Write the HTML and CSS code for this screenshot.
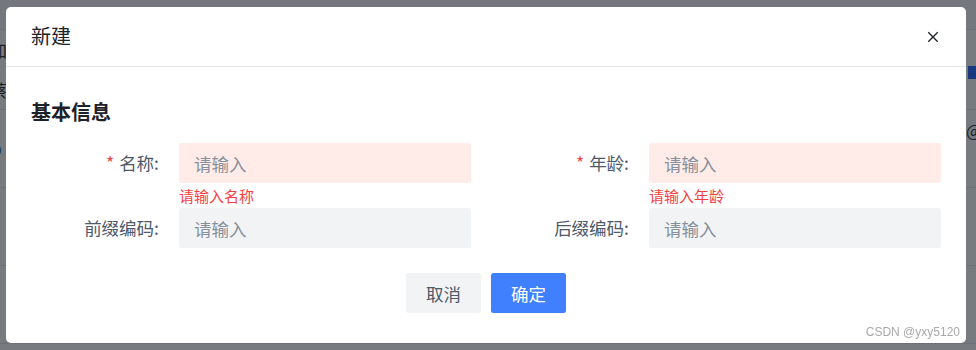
FILE: index.html
```html
<!DOCTYPE html>
<html lang="zh-CN">
<head>
  <meta charset="UTF-8" />
  <meta name="viewport" content="width=device-width, initial-scale=1.0"/>
  <title>新建</title>
  <link rel="stylesheet" href="styles.css">
</head>
<body>

  <!-- 底层列表页 -->
  <div class="page">
    <div class="page-row page-head"></div>
    <div class="page-row row-tall">
      <div class="cell-left">加<br>蔡</div>
      <div class="cell-right"><span class="link-bar"></span></div>
    </div>
    <div class="page-row row-mid">
      <div class="cell-left">D</div>
      <div class="cell-right">e@</div>
    </div>
    <div class="page-row row-mid"></div>
    <div class="page-row"></div>
  </div>

  <!-- 弹窗 -->
  <div class="mask">
    <div class="modal">
      <div class="modal-header">
        <span class="modal-title">新建</span>
        <button class="modal-close" type="button">
          <svg viewBox="0 0 48 48" width="16" height="16" fill="none" stroke="currentColor" stroke-width="4">
            <path d="M9.857 9.858 38.142 38.142M38.142 9.858 9.857 38.142"/>
          </svg>
        </button>
      </div>

      <div class="modal-body">
        <h3 class="section-title">基本信息</h3>

        <div class="form-grid">
          <div class="form-item">
            <label class="form-label"><span class="required">*</span>名称:</label>
            <div class="form-control">
              <input class="input is-error" type="text" placeholder="请输入" />
              <div class="form-message">请输入名称</div>
            </div>
          </div>
          <div class="form-item">
            <label class="form-label"><span class="required">*</span>年龄:</label>
            <div class="form-control">
              <input class="input is-error" type="text" placeholder="请输入" />
              <div class="form-message">请输入年龄</div>
            </div>
          </div>
          <div class="form-item">
            <label class="form-label">前缀编码:</label>
            <div class="form-control">
              <input class="input" type="text" placeholder="请输入" />
            </div>
          </div>
          <div class="form-item">
            <label class="form-label">后缀编码:</label>
            <div class="form-control">
              <input class="input" type="text" placeholder="请输入" />
            </div>
          </div>
        </div>

        <div class="form-actions">
          <button class="btn btn-secondary" type="button">取消</button>
          <button class="btn btn-primary" type="button">确定</button>
        </div>
      </div>
    </div>
  </div>

  <div class="watermark">CSDN @yxy5120</div>

</body>
</html>
```

FILE: styles.css
```css
body {
  margin: 0;
  padding: 0;
  background: #fff;
  font-family: "Noto Sans CJK SC", "Liberation Sans", sans-serif;
  color: #1d2129;
  overflow: hidden;
}

/* 底层页面 */
.page {
  height: 350px;
}

.page-row {
  display: flex;
  justify-content: space-between;
  border-bottom: 1px solid #e5e6eb;
  height: 77px;
  font-size: 17px;
  line-height: 24px;
  color: #1d2129;
}

.page-head {
  height: 29px;
  background: #f7f8fa;
}

.row-tall {
  height: 79px;
}

.cell-left {
  margin-left: -10px;
  padding-top: 28px;
}

.row-tall .cell-left {
  padding-top: 0;
  line-height: 40px;
}

.cell-right {
  margin-right: -6px;
  padding-top: 8px;
}

.link-bar {
  display: block;
  width: 14px;
  height: 13px;
  margin-top: 28px;
  background: #165dff;
}

/* 遮罩 + 弹窗 */
.mask {
  position: fixed;
  inset: 0;
  background: rgba(29, 33, 41, 0.6);
}

.modal {
  width: 960px;
  margin: 7px 0 0 6px;
  background: #fff;
  border-radius: 5px;
}

.modal-header {
  height: 59px;
  padding: 0 25px;
  display: flex;
  align-items: center;
  justify-content: space-between;
  border-bottom: 1px solid #e5e6eb;
}

.modal-title {
  font-size: 20px;
  line-height: 28px;
  margin-top: -2px;
  color: #1d2129;
}

.modal-close {
  width: 16px;
  height: 16px;
  padding: 0;
  border: none;
  background: transparent;
  color: #1d2129;
  cursor: pointer;
  display: flex;
}

.modal-body {
  padding: 30px 25px 30px;
}

.section-title {
  margin: 0 0 16px;
  font-size: 20px;
  line-height: 30px;
  font-weight: 700;
  color: #1d2129;
}

/* 表单 */
.form-grid {
  display: grid;
  grid-template-columns: 440px 440px;
  column-gap: 30px;
  margin-bottom: 25px;
}

.form-item {
  display: flex;
  align-items: flex-start;
}

.form-label {
  width: 148px;
  padding-right: 20px;
  box-sizing: border-box;
  text-align: right;
  font-size: 17.5px;
  line-height: 40px;
  color: #4e5969;
  white-space: nowrap;
}

.required {
  color: #f53f3f;
  margin-right: 5px;
}

.form-control {
  flex: 1;
}

.input {
  display: block;
  width: 100%;
  height: 40px;
  box-sizing: border-box;
  padding: 0 14px;
  border: 1px solid transparent;
  border-radius: 2.5px;
  background: #f2f3f5;
  font-family: inherit;
  font-size: 17.5px;
  color: #1d2129;
  outline: none;
}

.input::placeholder {
  color: #86909c;
}

.input.is-error {
  background: #ffece8;
}

.form-message {
  height: 25px;
  line-height: 25px;
  font-size: 15px;
  color: #f53f3f;
}

.form-actions {
  display: flex;
  justify-content: center;
  gap: 10px;
}

.btn {
  height: 40px;
  padding: 0 19px;
  border: 1px solid transparent;
  border-radius: 2.5px;
  font-family: inherit;
  font-size: 17.5px;
  cursor: pointer;
}

.btn-secondary {
  background: #f2f3f5;
  color: #4e5969;
}

.btn-primary {
  background: #4080ff;
  color: #fff;
}

.watermark {
  position: fixed;
  right: 16px;
  bottom: 11px;
  font-family: "Liberation Sans", sans-serif;
  font-size: 12px;
  color: #a9a9a9;
}
```
